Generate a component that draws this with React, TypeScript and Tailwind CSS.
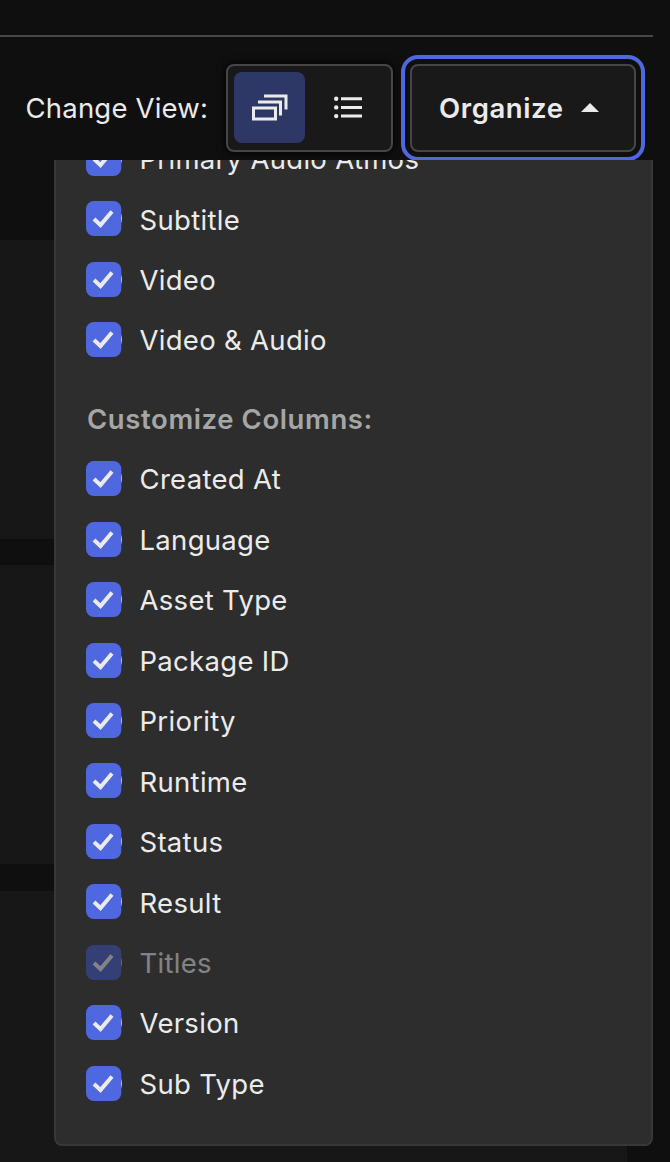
import { useState } from 'react';

type Option = {
  id: string;
  label: string;
  disabled?: boolean;
};

const FILTERS: ReadonlyArray<Option> = [
  { id: 'primary-audio-atmos', label: 'Primary Audio Atmos' },
  { id: 'subtitle', label: 'Subtitle' },
  { id: 'video', label: 'Video' },
  { id: 'video-audio', label: 'Video & Audio' },
];

const COLUMNS: ReadonlyArray<Option> = [
  { id: 'created-at', label: 'Created At' },
  { id: 'language', label: 'Language' },
  { id: 'asset-type', label: 'Asset Type' },
  { id: 'package-id', label: 'Package ID' },
  { id: 'priority', label: 'Priority' },
  { id: 'runtime', label: 'Runtime' },
  { id: 'status', label: 'Status' },
  { id: 'result', label: 'Result' },
  { id: 'titles', label: 'Titles', disabled: true },
  { id: 'version', label: 'Version' },
  { id: 'sub-type', label: 'Sub Type' },
];

function StackIcon() {
  return (
    <svg width="36" height="28" viewBox="0 0 36 28" fill="none" stroke="#ebebeb" strokeWidth="3">
      <path d="M1.5 14h22v11h-22z" />
      <path d="M6 8h22.5V21.5" />
      <path d="M12 2h22V15.5" />
    </svg>
  );
}

function ListIcon() {
  return (
    <svg width="29" height="23" viewBox="0 0 29 23" fill="#ebebeb">
      <circle cx="2.2" cy="2.7" r="2.2" />
      <circle cx="2.2" cy="11.4" r="2.2" />
      <circle cx="2.2" cy="20.1" r="2.2" />
      <path d="M7 1.2h21v3H7zM7 9.9h21v3H7zM7 18.6h21v3H7z" />
    </svg>
  );
}

function CheckRow({ option, checked, onToggle }: { option: Option; checked: boolean; onToggle: () => void }) {
  return (
    <button
      type="button"
      role="checkbox"
      aria-checked={checked}
      disabled={option.disabled}
      onClick={onToggle}
      className="group flex h-[60.44px] w-full shrink-0 items-center text-left"
    >
      <span className="flex h-9 w-9 shrink-0 items-center group-disabled:opacity-45">
        {checked && (
          <svg width="36" height="35" viewBox="0 0 36 35">
            <path d="M34 10.5q4 7 0 14z" fill="#ebebeb" />
            <rect width="35.3" height="35" rx="8" fill="#5068df" className="group-disabled:fill-[#3d55cc]" />
            <path d="M8 18l6.5 6L26 10.5" fill="none" stroke="#ebebeb" strokeWidth="4" />
          </svg>
        )}
      </span>
      <span className="ml-[17.5px] pt-[2.6px] whitespace-nowrap group-disabled:opacity-45">{option.label}</span>
    </button>
  );
}

export default function App() {
  const [view, setView] = useState<'stack' | 'list'>('stack');
  const [hidden, setHidden] = useState<string[]>([]);

  function toggle(id: string) {
    setHidden((prev) => (prev.includes(id) ? prev.filter((x) => x !== id) : [...prev, id]));
  }

  function renderRow(option: Option) {
    return (
      <CheckRow
        key={option.id}
        option={option}
        checked={!hidden.includes(option.id)}
        onToggle={() => toggle(option.id)}
      />
    );
  }

  return (
    <div className="relative h-[1162px] w-[670px] overflow-hidden bg-[#0f0f0f] font-['Inter',sans-serif] text-[27.5px] tracking-[0.3px] text-[#ebebeb]">
      <div className="h-[37px] w-[653px] border-b-2 border-[#464646]" />

      <header className="flex h-[123px] items-start pt-[27px] pl-[25.5px]">
        <span className="flex h-[88px] w-[200.5px] items-center pt-0.5 tracking-[0.2px] whitespace-nowrap">
          Change View:
        </span>
        <div className="flex h-[88px] w-[167px] items-center rounded-lg border-2 border-[#464646] bg-[#191919] pb-px pl-1.5 shadow-[0_0_10px_#000000]">
          <button
            type="button"
            aria-label="Stacked view"
            onClick={() => setView('stack')}
            className={`flex h-[71px] w-[71px] items-center justify-center rounded-lg ${view === 'stack' ? 'bg-[#2e3866]' : ''}`}
          >
            <StackIcon />
          </button>
          <button
            type="button"
            aria-label="List view"
            onClick={() => setView('list')}
            className={`ml-2 flex h-[71px] w-[71px] items-center justify-center rounded-lg ${view === 'list' ? 'bg-[#2e3866]' : ''}`}
          >
            <ListIcon />
          </button>
        </div>
        <button
          type="button"
          className="ml-[17px] flex h-[88px] w-[226px] items-center rounded-lg border-2 border-[#464646] bg-[#191919] pl-[27px] font-semibold tracking-[0.6px] outline-4 outline-offset-5 outline-[#5068df]"
        >
          <span className="w-[142px] pt-0.5 text-left">Organize</span>
          <svg width="18" height="9" viewBox="0 0 18 9" fill="#ebebeb" className="mb-px">
            <path d="M0 9L9 0l9 9z" />
          </svg>
        </button>
      </header>

      <main className="flex w-[627px] flex-col pt-20">
        <div className="h-[299px] bg-[#171717]" />
        <div className="mt-[26px] h-[299px] bg-[#171717]" />
        <div className="mt-[27px] h-[299px] bg-[#171717]" />
      </main>

      {/* Open menu, scrolled so the first row is cut off by its top edge */}
      <div className="absolute top-[160px] left-[54px] flex h-[986px] w-[599px] flex-col overflow-hidden rounded-b-lg border-x-2 border-b-2 border-[#383838] bg-[#2d2d2d] pl-[30px]">
        <div className="-mt-[31.8px] flex shrink-0 flex-col">{FILTERS.map(renderRow)}</div>
        <h2 className="flex h-[78.6px] shrink-0 items-center pt-[20px] pl-px font-semibold tracking-[0.6px] text-[#a6a6a6]">
          Customize Columns:
        </h2>
        <div className="flex shrink-0 flex-col">{COLUMNS.map(renderRow)}</div>
      </div>
    </div>
  );
}
